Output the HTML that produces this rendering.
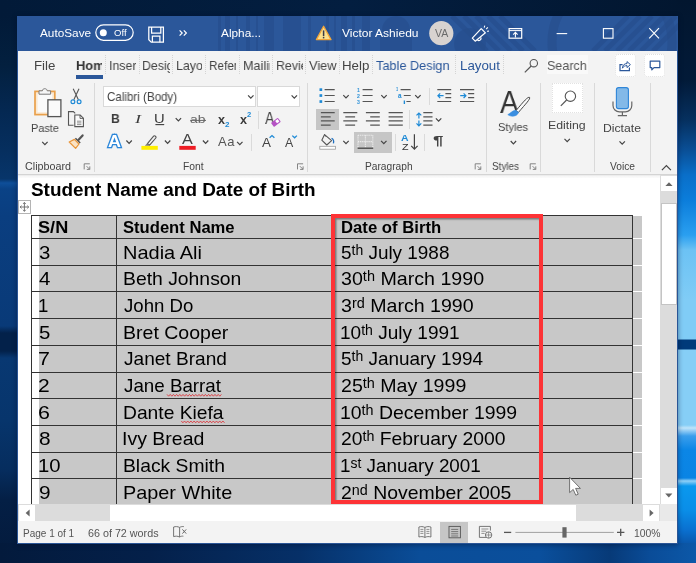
<!DOCTYPE html>
<html lang="en">
<head>
<meta charset="utf-8">
<title>Alphabetize - Word</title>
<style>
*{box-sizing:border-box;margin:0;padding:0}
html,body{width:696px;height:563px;overflow:hidden}
body{position:relative;background:#031c3c;font-family:"Liberation Sans",sans-serif;color:#444}
.abs{position:absolute}
.t{position:absolute;white-space:nowrap;transform-origin:0 50%;display:block;z-index:2;will-change:transform}
svg{position:absolute;overflow:visible}
.desk{position:absolute}
#win{position:absolute;left:17px;top:16px;width:661px;height:527.6px;background:#f3f3f3;border:1px solid #2a5596;border-top:0;box-shadow:0 1px 5px rgba(0,10,40,0.45)}
#titlebar{position:absolute;left:17px;top:16px;width:661px;height:34.6px;background:#2b579a;overflow:hidden}
#doc{position:absolute;left:18px;top:175px;width:642.2px;height:329.3px;background:#fff;overflow:hidden}
sup{font-size:74%;vertical-align:baseline;position:relative;top:-0.32em;line-height:0}
</style>
</head>
<body>

<div class="desk" style="left:0;top:0;width:696px;height:563px;background:linear-gradient(90deg,#021a38 0%,#031e40 50%,#02162f 100%)"></div>
<div class="desk" style="left:0;top:16px;width:18px;height:547px;background:linear-gradient(180deg,#021a38 0px,#03203f 50px,#042852 95px,#062f5f 135px,#07356a 163px,#0e4f9a 167px,#0a4286 173px,#0a3e80 200px,#093a78 310px,#03214a 317px,#03214a 335px,#083872 342px,#07356c 404px,#062d5e 454px,#041f45 484px,#031a3c 547px)"></div>
<div class="desk" style="left:677px;top:0;width:19px;height:563px;background:linear-gradient(180deg,#02162f 0px,#021a38 80px,#06305f 120px,#0a4f96 150px,#0a6fc9 175px,#0b7ddb 200px,#2a9ff0 235px,#6cc2f4 250px,#80ccf6 300px,#80ccf6 339px,#003a7a 340px,#003a7a 349px,#86cef6 350px,#86cef6 425px,#bfe4fa 428px,#3a9eec 436px,#0b86e6 450px,#0a84e4 478px,#8fd0f7 481px,#0a98ee 486px,#0a8ee8 510px,#0a70d0 530px,#0a55a8 545px,#0a4a96 563px)"></div>
<div class="desk" style="left:0;top:543px;width:696px;height:20px;background:linear-gradient(90deg,#031a3c 0px,#04204a 150px,#063068 300px,#0a4d98 420px,#0a4f9c 540px,#073a78 610px,#0a4c98 650px,#0c58a8 696px)"></div>
<div id="win"></div>
<div id="titlebar">
<svg width="661" height="35" viewBox="17 16 661 35" style="left:0;top:0">
<g fill="#264d8c" opacity="0.6">
<rect x="218" y="16" width="3" height="35"/><rect x="225" y="16" width="5" height="35"/><rect x="236" y="16" width="2" height="35"/>
<rect x="246" y="16" width="4" height="35"/><rect x="256" y="16" width="2" height="35"/><rect x="264" y="16" width="10" height="35"/>
<rect x="283" y="16" width="18" height="35"/><rect x="308" y="16" width="3" height="35"/><rect x="326" y="16" width="3" height="35"/>
<rect x="334" y="16" width="2" height="35"/><rect x="341" y="16" width="6" height="35"/><rect x="352" y="16" width="3" height="35"/><rect x="362" y="16" width="8" height="35"/>
<circle cx="396" cy="30" r="14"/><rect x="380" y="36" width="32" height="15"/>
<circle cx="470" cy="44" r="16"/>

</g>
<circle cx="612" cy="42" r="60" fill="none" stroke="#264d8c" stroke-width="9" opacity="0.6"/>
<g stroke="#264d8c" stroke-width="5" opacity="0.6">
<path d="M452 16l35 35M464 16l35 35M476 16l35 35M488 16l35 35M500 16l35 35"/>
<path d="M640 16l-35 35M652 16l-35 35M664 16l-35 35M676 16l-35 35M688 16l-35 35M628 16l-35 35"/>
</g>
</svg>
</div>
<div class="abs" style="left:546.5px;top:55px;width:41.5px;height:18.5px;background:#f9f9f9"></div>
<div class="abs" style="left:614.5px;top:53.5px;width:21px;height:23.5px;background:#fff;border:1px dotted #e0e0e0;border-radius:3px"></div>
<div class="abs" style="left:644.2px;top:53.5px;width:20.6px;height:23.5px;background:#fff;border:1px dotted #e0e0e0;border-radius:3px"></div>
<div class="abs" style="left:105.2px;top:55px;width:1px;height:20px;background:repeating-linear-gradient(#d4d4d4 0 1px,rgba(0,0,0,0) 1px 2px)"></div>
<div class="abs" style="left:138.5px;top:55px;width:1px;height:20px;background:repeating-linear-gradient(#d4d4d4 0 1px,rgba(0,0,0,0) 1px 2px)"></div>
<div class="abs" style="left:171.9px;top:55px;width:1px;height:20px;background:repeating-linear-gradient(#d4d4d4 0 1px,rgba(0,0,0,0) 1px 2px)"></div>
<div class="abs" style="left:205.3px;top:55px;width:1px;height:20px;background:repeating-linear-gradient(#d4d4d4 0 1px,rgba(0,0,0,0) 1px 2px)"></div>
<div class="abs" style="left:238.6px;top:55px;width:1px;height:20px;background:repeating-linear-gradient(#d4d4d4 0 1px,rgba(0,0,0,0) 1px 2px)"></div>
<div class="abs" style="left:272.0px;top:55px;width:1px;height:20px;background:repeating-linear-gradient(#d4d4d4 0 1px,rgba(0,0,0,0) 1px 2px)"></div>
<div class="abs" style="left:305.4px;top:55px;width:1px;height:20px;background:repeating-linear-gradient(#d4d4d4 0 1px,rgba(0,0,0,0) 1px 2px)"></div>
<div class="abs" style="left:338.9px;top:55px;width:1px;height:20px;background:repeating-linear-gradient(#d4d4d4 0 1px,rgba(0,0,0,0) 1px 2px)"></div>
<div class="abs" style="left:371.8px;top:55px;width:1px;height:20px;background:repeating-linear-gradient(#d4d4d4 0 1px,rgba(0,0,0,0) 1px 2px)"></div>
<div class="abs" style="left:455.0px;top:55px;width:1px;height:20px;background:repeating-linear-gradient(#d4d4d4 0 1px,rgba(0,0,0,0) 1px 2px)"></div>
<div class="abs" style="left:503.1px;top:55px;width:1px;height:20px;background:repeating-linear-gradient(#d4d4d4 0 1px,rgba(0,0,0,0) 1px 2px)"></div>
<div class="abs" style="left:76px;top:75px;width:26.8px;height:3.6px;background:#2b579a"></div>
<div class="abs" style="left:18px;top:174px;width:659px;height:1px;background:#d4d4d4"></div>
<div class="abs" style="left:94px;top:83px;width:1px;height:88.5px;background:#d9d9d9"></div>
<div class="abs" style="left:307px;top:83px;width:1px;height:88.5px;background:#d9d9d9"></div>
<div class="abs" style="left:486px;top:83px;width:1px;height:88.5px;background:#d9d9d9"></div>
<div class="abs" style="left:540px;top:83px;width:1px;height:88.5px;background:#d9d9d9"></div>
<div class="abs" style="left:594px;top:83px;width:1px;height:88.5px;background:#d9d9d9"></div>
<div class="abs" style="left:650px;top:83px;width:1px;height:88.5px;background:#d9d9d9"></div>
<div class="abs" style="left:257.7px;top:111px;width:1px;height:17.5px;background:#dadada"></div>
<div class="abs" style="left:251.2px;top:133.5px;width:1px;height:17.5px;background:#dadada"></div>
<div class="abs" style="left:429.3px;top:88px;width:1px;height:16.5px;background:#dadada"></div>
<div class="abs" style="left:409.3px;top:110px;width:1px;height:18.5px;background:#dadada"></div>
<div class="abs" style="left:395.0px;top:133.5px;width:1px;height:17.5px;background:#dadada"></div>
<div class="abs" style="left:423.5px;top:133.5px;width:1px;height:17.5px;background:#dadada"></div>
<div class="abs" style="left:103.2px;top:86px;width:153px;height:21px;background:#fff;border:1px solid #d9d9d9"></div>
<div class="abs" style="left:257.4px;top:86px;width:42.2px;height:21px;background:#fff;border:1px solid #d9d9d9"></div>
<div class="abs" style="left:316.2px;top:109.4px;width:22.9px;height:20.2px;background:#c6c6c6"></div>
<div class="abs" style="left:354.2px;top:132px;width:37.9px;height:20.6px;background:#c6c6c6"></div>
<div class="abs" style="left:552px;top:83.3px;width:30.6px;height:30.2px;background:#fff;border:1px dotted #e2e2e2"></div>
<span class="t" id="t_autosave" style="left:40.00px;top:26.00px;font-size:11.6px;line-height:14px;font-weight:400;color:#fff;transform:scaleX(1.0171);">AutoSave</span>
<span class="t" id="t_off" style="left:114.46px;top:28.00px;font-size:8.8px;line-height:11px;font-weight:400;color:#fff;transform:scaleX(1.0844);">Off</span>
<span class="t" id="t_alpha" style="left:220.80px;top:26.00px;font-size:11.6px;line-height:14px;font-weight:400;color:#fff;transform:scaleX(1.0196);">Alpha...</span>
<span class="t" id="t_victor" style="left:342.20px;top:26.00px;font-size:11.6px;line-height:14px;font-weight:400;color:#fff;transform:scaleX(1.0348);">Victor Ashiedu</span>
<span class="t" id="tab_file" style="left:34.12px;top:58.00px;font-size:13.3px;line-height:16px;font-weight:400;color:#444;transform:scaleX(0.9823);">File</span>
<div class="abs" style="left:73px;top:50.5px;width:29.0px;height:29.5px;overflow:hidden"><span class="t" id="tab_home" style="left:3.00px;top:7.50px;font-size:13.3px;line-height:16px;font-weight:700;color:#333;transform:scaleX(0.9700);">Home</span></div>
<div class="abs" style="left:106.5px;top:50.5px;width:29.1px;height:29.5px;overflow:hidden"><span class="t" id="tab_insert" style="left:2.80px;top:7.50px;font-size:13.3px;line-height:16px;font-weight:400;color:#444;transform:scaleX(0.9300);">Insert</span></div>
<div class="abs" style="left:139.8px;top:50.5px;width:29.8px;height:29.5px;overflow:hidden"><span class="t" id="tab_design" style="left:2.60px;top:7.50px;font-size:13.3px;line-height:16px;font-weight:400;color:#444;transform:scaleX(0.9300);">Design</span></div>
<div class="abs" style="left:173.2px;top:50.5px;width:29.2px;height:29.5px;overflow:hidden"><span class="t" id="tab_layout" style="left:2.80px;top:7.50px;font-size:13.3px;line-height:16px;font-weight:400;color:#444;transform:scaleX(0.9300);">Layout</span></div>
<div class="abs" style="left:206.6px;top:50.5px;width:29.6px;height:29.5px;overflow:hidden"><span class="t" id="tab_refs" style="left:2.40px;top:7.50px;font-size:13.3px;line-height:16px;font-weight:400;color:#444;transform:scaleX(0.8850);">References</span></div>
<div class="abs" style="left:239.9px;top:50.5px;width:30.3px;height:29.5px;overflow:hidden"><span class="t" id="tab_mail" style="left:2.90px;top:7.50px;font-size:13.3px;line-height:16px;font-weight:400;color:#444;transform:scaleX(0.9500);">Mailings</span></div>
<div class="abs" style="left:273.3px;top:50.5px;width:29.7px;height:29.5px;overflow:hidden"><span class="t" id="tab_review" style="left:2.70px;top:7.50px;font-size:13.3px;line-height:16px;font-weight:400;color:#444;transform:scaleX(0.9300);">Review</span></div>
<span class="t" id="tab_view" style="left:308.76px;top:58.00px;font-size:13.3px;line-height:16px;font-weight:400;color:#444;transform:scaleX(0.9614);">View</span>
<span class="t" id="tab_help" style="left:342.01px;top:58.00px;font-size:13.3px;line-height:16px;font-weight:400;color:#444;transform:scaleX(0.9864);">Help</span>
<span class="t" id="tab_tdesign" style="left:375.76px;top:58.00px;font-size:13.3px;line-height:16px;font-weight:400;color:#2b579a;transform:scaleX(0.9571);">Table Design</span>
<span class="t" id="tab_tlayout" style="left:459.70px;top:58.00px;font-size:13.3px;line-height:16px;font-weight:400;color:#2b579a;transform:scaleX(0.9949);">Layout</span>
<span class="t" id="tab_search" style="left:547.29px;top:58.00px;font-size:13.3px;line-height:16px;font-weight:400;color:#555;transform:scaleX(0.9432);">Search</span>
<span class="t" id="r_paste" style="left:31.03px;top:121.00px;font-size:11.2px;line-height:14px;font-weight:400;color:#444;transform:scaleX(0.9725);">Paste</span>
<span class="t" id="r_clipboard" style="left:24.97px;top:160.00px;font-size:10.2px;line-height:13px;font-weight:400;color:#444;transform:scaleX(1.0541);">Clipboard</span>
<span class="t" id="r_calibri" style="left:106.71px;top:90.00px;font-size:11.9px;line-height:15px;font-weight:400;color:#444;transform:scaleX(0.9739);">Calibri (Body)</span>
<span class="t" id="r_font" style="left:182.74px;top:160.00px;font-size:10.2px;line-height:13px;font-weight:400;color:#444;transform:scaleX(1.0127);">Font</span>
<span class="t" id="r_paragraph" style="left:364.95px;top:160.00px;font-size:10.2px;line-height:13px;font-weight:400;color:#444;transform:scaleX(1.0011);">Paragraph</span>
<span class="t" id="r_styles_btn" style="left:498.21px;top:120.00px;font-size:11.4px;line-height:14px;font-weight:400;color:#444;transform:scaleX(0.9719);">Styles</span>
<span class="t" id="r_styles" style="left:491.51px;top:160.00px;font-size:10.2px;line-height:13px;font-weight:400;color:#444;transform:scaleX(0.9704);">Styles</span>
<span class="t" id="r_editing" style="left:548.32px;top:118.00px;font-size:11.4px;line-height:14px;font-weight:400;color:#444;transform:scaleX(1.0797);">Editing</span>
<span class="t" id="r_dictate" style="left:603.33px;top:121.00px;font-size:11.4px;line-height:14px;font-weight:400;color:#444;transform:scaleX(1.0706);">Dictate</span>
<span class="t" id="r_voice" style="left:610.00px;top:160.00px;font-size:10.2px;line-height:13px;font-weight:400;color:#444;transform:scaleX(1.0041);">Voice</span>
<span class="t" id="g_b" style="left:110.52px;top:110.00px;font-size:13.4px;line-height:17px;font-weight:700;color:#3b3b3b;transform:scaleX(0.9091);">B</span>
<span class="t" id="g_i" style="left:134.50px;top:111.00px;font-size:13.2px;line-height:16px;font-weight:400;color:#3b3b3b;transform:scaleX(1.3800);font-family:'Liberation Serif',serif;font-style:italic">I</span>
<span class="t" id="g_u" style="left:154.33px;top:111.00px;font-size:12.6px;line-height:16px;font-weight:400;color:#3b3b3b;transform:scaleX(1.1724);">U</span>
<span class="t" id="g_ab" style="left:190.20px;top:112.00px;font-size:11.6px;line-height:14px;font-weight:400;color:#666;transform:scaleX(1.2000);">ab</span>
<span class="t" id="g_xsub" style="left:217.75px;top:112.00px;font-size:12.6px;line-height:16px;font-weight:700;color:#3b3b3b;transform:scaleX(1.0000);">x</span>
<span class="t" id="g_xsub2" style="left:224.51px;top:120.00px;font-size:7.0px;line-height:9px;font-weight:700;color:#1e8ad6;transform:scaleX(1.1429);">2</span>
<span class="t" id="g_xsup" style="left:240.25px;top:112.00px;font-size:12.6px;line-height:16px;font-weight:700;color:#3b3b3b;transform:scaleX(1.0000);">x</span>
<span class="t" id="g_xsup2" style="left:246.93px;top:110.00px;font-size:7.0px;line-height:9px;font-weight:700;color:#1e8ad6;transform:scaleX(1.0857);">2</span>
<span class="t" id="g_clearA" style="left:264.60px;top:108.00px;font-size:17.0px;line-height:21px;font-weight:400;color:#444;transform:scaleX(0.8178);">A</span>
<span class="t" id="g_Aa" style="left:218.00px;top:134.00px;font-size:13.0px;line-height:16px;font-weight:400;color:#555;transform:scaleX(0.9879);letter-spacing:0.6px">Aa</span>
<span class="t" id="g_growA" style="left:261.80px;top:134.00px;font-size:13.4px;line-height:17px;font-weight:400;color:#444;transform:scaleX(0.9778);">A</span>
<span class="t" id="g_shrinkA" style="left:284.50px;top:136.00px;font-size:12.2px;line-height:15px;font-weight:400;color:#444;transform:scaleX(1.0125);">A</span>
<span class="t" id="g_colorA" style="left:182.40px;top:131.00px;font-size:14.0px;line-height:17px;font-weight:400;color:#444;transform:scaleX(1.1568);">A</span>
<span class="t" id="g_sortA" style="left:401.43px;top:132.00px;font-size:9.6px;line-height:12px;font-weight:700;color:#1e8ad6;transform:scaleX(1.0923);">A</span>
<span class="t" id="g_sortZ" style="left:401.59px;top:142.00px;font-size:8.8px;line-height:11px;font-weight:400;color:#333;transform:scaleX(1.2200);">Z</span>
<span class="t" id="g_pil" style="left:433.22px;top:134.00px;font-size:12.0px;line-height:15px;font-weight:700;color:#444;transform:scaleX(1.5652);">¶</span>
<span class="t" id="g_stylesA" style="left:500.00px;top:83.00px;font-size:32.2px;line-height:39px;font-weight:400;color:#333;transform:scaleX(0.8698);">A</span>
<span class="t" id="s_page" style="left:22.55px;top:528.00px;font-size:10.0px;line-height:12px;font-weight:400;color:#555;transform:scaleX(0.9940);">Page 1 of 1</span>
<span class="t" id="s_words" style="left:88.26px;top:528.00px;font-size:10.0px;line-height:12px;font-weight:400;color:#555;transform:scaleX(1.0749);">66 of 72 words</span>
<span class="t" id="s_zoom" style="left:633.62px;top:528.00px;font-size:10.0px;line-height:12px;font-weight:400;color:#555;transform:scaleX(1.0367);">100%</span>
<div id="doc">
<span class="t" id="d_head" style="left:13.20px;top:3.00px;font-size:18.8px;line-height:23px;font-weight:700;color:#000;transform:scaleX(1.0066);">Student Name and Date of Birth</span>
<div class="abs" style="left:20.7px;top:39.8px;width:594.3px;height:300px;background:#c8c8c8"></div>
<div class="abs" style="left:615.0px;top:41.0px;width:9px;height:22.0px;background:#c8c8c8"></div>
<div class="abs" style="left:615.0px;top:64.0px;width:9px;height:26.0px;background:#c8c8c8"></div>
<div class="abs" style="left:615.0px;top:91.0px;width:9px;height:25.0px;background:#c8c8c8"></div>
<div class="abs" style="left:615.0px;top:117.0px;width:9px;height:26.0px;background:#c8c8c8"></div>
<div class="abs" style="left:615.0px;top:144.0px;width:9px;height:26.0px;background:#c8c8c8"></div>
<div class="abs" style="left:615.0px;top:171.0px;width:9px;height:26.0px;background:#c8c8c8"></div>
<div class="abs" style="left:615.0px;top:198.0px;width:9px;height:25.0px;background:#c8c8c8"></div>
<div class="abs" style="left:615.0px;top:224.0px;width:9px;height:26.0px;background:#c8c8c8"></div>
<div class="abs" style="left:615.0px;top:251.0px;width:9px;height:26.0px;background:#c8c8c8"></div>
<div class="abs" style="left:615.0px;top:278.0px;width:9px;height:25.0px;background:#c8c8c8"></div>
<div class="abs" style="left:615.0px;top:304.0px;width:9px;height:26.0px;background:#c8c8c8"></div>
<div class="abs" style="left:13.2px;top:40.0px;width:602.3px;height:1px;background:#333"></div>
<div class="abs" style="left:13.2px;top:63.0px;width:602.3px;height:1px;background:#333"></div>
<div class="abs" style="left:13.2px;top:90.0px;width:602.3px;height:1px;background:#333"></div>
<div class="abs" style="left:13.2px;top:116.0px;width:602.3px;height:1px;background:#333"></div>
<div class="abs" style="left:13.2px;top:143.0px;width:602.3px;height:1px;background:#333"></div>
<div class="abs" style="left:13.2px;top:170.0px;width:602.3px;height:1px;background:#333"></div>
<div class="abs" style="left:13.2px;top:197.0px;width:602.3px;height:1px;background:#333"></div>
<div class="abs" style="left:13.2px;top:223.0px;width:602.3px;height:1px;background:#333"></div>
<div class="abs" style="left:13.2px;top:250.0px;width:602.3px;height:1px;background:#333"></div>
<div class="abs" style="left:13.2px;top:277.0px;width:602.3px;height:1px;background:#333"></div>
<div class="abs" style="left:13.2px;top:303.0px;width:602.3px;height:1px;background:#333"></div>
<div class="abs" style="left:13.0px;top:40.0px;width:1px;height:300px;background:#333"></div>
<div class="abs" style="left:98.0px;top:40.0px;width:1px;height:300px;background:#333"></div>
<div class="abs" style="left:314.0px;top:40.0px;width:1px;height:300px;background:#333"></div>
<div class="abs" style="left:522.0px;top:40.0px;width:1px;height:300px;background:#333"></div>
<div class="abs" style="left:614.0px;top:40.0px;width:1px;height:300px;background:#333"></div>
<span class="t" id="h_sn" style="left:20.43px;top:43.00px;font-size:15.8px;line-height:19px;font-weight:700;color:#000;transform:scaleX(1.1475);">S/N</span>
<span class="t" id="h_name" style="left:105.27px;top:43.00px;font-size:15.8px;line-height:19px;font-weight:700;color:#000;transform:scaleX(1.0508);">Student Name</span>
<span class="t" id="h_dob" style="left:322.84px;top:43.00px;font-size:15.8px;line-height:19px;font-weight:700;color:#000;transform:scaleX(1.0577);">Date of Birth</span>
<span class="t" id="c_sn0" style="left:20.78px;top:66.00px;font-size:18.6px;line-height:23px;font-weight:400;color:#000;transform:scaleX(1.0971);">3</span>
<span class="t" id="c_nm0" style="left:104.59px;top:66.00px;font-size:18.6px;line-height:23px;font-weight:400;color:#000;transform:scaleX(1.0742);">Nadia Ali</span>
<span class="t" id="c_dt0" style="left:323.14px;top:66.00px;font-size:18.6px;line-height:23px;font-weight:400;color:#000;transform:scaleX(1.0171);">5<sup>th</sup> July 1988</span>
<span class="t" id="c_sn1" style="left:21.05px;top:92.00px;font-size:18.6px;line-height:23px;font-weight:400;color:#000;transform:scaleX(1.1027);">4</span>
<span class="t" id="c_nm1" style="left:104.64px;top:92.00px;font-size:18.6px;line-height:23px;font-weight:400;color:#000;transform:scaleX(1.0405);">Beth Johnson</span>
<span class="t" id="c_dt1" style="left:323.11px;top:92.00px;font-size:18.6px;line-height:23px;font-weight:400;color:#000;transform:scaleX(1.0560);">30<sup>th</sup> March 1990</span>
<span class="t" id="c_sn2" style="left:20.10px;top:119.00px;font-size:18.6px;line-height:23px;font-weight:400;color:#000;transform:scaleX(1.0000);">1</span>
<span class="t" id="c_nm2" style="left:105.95px;top:119.00px;font-size:18.6px;line-height:23px;font-weight:400;color:#000;transform:scaleX(0.9978);">John Do</span>
<span class="t" id="c_dt2" style="left:323.11px;top:119.00px;font-size:18.6px;line-height:23px;font-weight:400;color:#000;transform:scaleX(1.0530);">3<sup>rd</sup> March 1990</span>
<span class="t" id="c_sn3" style="left:20.78px;top:146.00px;font-size:18.6px;line-height:23px;font-weight:400;color:#000;transform:scaleX(1.0971);">5</span>
<span class="t" id="c_nm3" style="left:104.62px;top:146.00px;font-size:18.6px;line-height:23px;font-weight:400;color:#000;transform:scaleX(1.0508);">Bret Cooper</span>
<span class="t" id="c_dt3" style="left:322.36px;top:146.00px;font-size:18.6px;line-height:23px;font-weight:400;color:#000;transform:scaleX(1.0236);">10<sup>th</sup> July 1991</span>
<span class="t" id="c_sn4" style="left:20.45px;top:172.00px;font-size:18.6px;line-height:23px;font-weight:400;color:#000;transform:scaleX(1.1529);">7</span>
<span class="t" id="c_nm4" style="left:105.94px;top:172.00px;font-size:18.6px;line-height:23px;font-weight:400;color:#000;transform:scaleX(1.0258);">Janet Brand</span>
<span class="t" id="c_dt4" style="left:323.14px;top:172.00px;font-size:18.6px;line-height:23px;font-weight:400;color:#000;transform:scaleX(1.0173);">5<sup>th</sup> January 1994</span>
<span class="t" id="c_sn5" style="left:20.47px;top:199.00px;font-size:18.6px;line-height:23px;font-weight:400;color:#000;transform:scaleX(1.1294);">2</span>
<span class="t" id="c_nm5" style="left:105.95px;top:199.00px;font-size:18.6px;line-height:23px;font-weight:400;color:#000;transform:scaleX(1.0089);">Jane Barrat</span>
<span class="t" id="c_dt5" style="left:322.85px;top:199.00px;font-size:18.6px;line-height:23px;font-weight:400;color:#000;transform:scaleX(1.0530);">25<sup>th</sup> May 1999</span>
<span class="t" id="c_sn6" style="left:20.45px;top:226.00px;font-size:18.6px;line-height:23px;font-weight:400;color:#000;transform:scaleX(1.1529);">6</span>
<span class="t" id="c_nm6" style="left:104.65px;top:226.00px;font-size:18.6px;line-height:23px;font-weight:400;color:#000;transform:scaleX(1.0350);">Dante Kiefa</span>
<span class="t" id="c_dt6" style="left:322.33px;top:226.00px;font-size:18.6px;line-height:23px;font-weight:400;color:#000;transform:scaleX(1.0445);">10<sup>th</sup> December 1999</span>
<span class="t" id="c_sn7" style="left:20.76px;top:252.00px;font-size:18.6px;line-height:23px;font-weight:400;color:#000;transform:scaleX(1.1200);">8</span>
<span class="t" id="c_nm7" style="left:104.36px;top:252.00px;font-size:18.6px;line-height:23px;font-weight:400;color:#000;transform:scaleX(1.0490);">Ivy Bread</span>
<span class="t" id="c_dt7" style="left:322.86px;top:252.00px;font-size:18.6px;line-height:23px;font-weight:400;color:#000;transform:scaleX(1.0396);">20<sup>th</sup> February 2000</span>
<span class="t" id="c_sn8" style="left:19.96px;top:279.00px;font-size:18.6px;line-height:23px;font-weight:400;color:#000;transform:scaleX(1.0919);">10</span>
<span class="t" id="c_nm8" style="left:104.64px;top:279.00px;font-size:18.6px;line-height:23px;font-weight:400;color:#000;transform:scaleX(1.0377);">Black Smith</span>
<span class="t" id="c_dt8" style="left:322.38px;top:279.00px;font-size:18.6px;line-height:23px;font-weight:400;color:#000;transform:scaleX(1.0139);">1<sup>st</sup> January 2001</span>
<span class="t" id="c_sn9" style="left:20.76px;top:306.00px;font-size:18.6px;line-height:23px;font-weight:400;color:#000;transform:scaleX(1.1200);">9</span>
<span class="t" id="c_nm9" style="left:104.60px;top:306.00px;font-size:18.6px;line-height:23px;font-weight:400;color:#000;transform:scaleX(1.0670);">Paper White</span>
<span class="t" id="c_dt9" style="left:322.86px;top:306.00px;font-size:18.6px;line-height:23px;font-weight:400;color:#000;transform:scaleX(1.0443);">2<sup>nd</sup> November 2005</span>
<svg width="642" height="330" viewBox="0 0 642 330" style="left:0;top:0"><polyline points="149.0,219.4 150.6,221.2 152.2,219.4 153.8,221.2 155.4,219.4 157.0,221.2 158.6,219.4 160.2,221.2 161.8,219.4 163.4,221.2 165.0,219.4 166.6,221.2 168.2,219.4 169.8,221.2 171.4,219.4 173.0,221.2 174.6,219.4 176.2,221.2 177.8,219.4 179.4,221.2 181.0,219.4 182.6,221.2 184.2,219.4 185.8,221.2 187.4,219.4 189.0,221.2 190.6,219.4 192.2,221.2 193.8,219.4 195.4,221.2 197.0,219.4 198.6,221.2 200.2,219.4 201.8,221.2 203.4,219.4" fill="none" stroke="#e0282e" stroke-width="0.8"/><polyline points="163.3,246.0 164.9,247.8 166.5,246.0 168.1,247.8 169.7,246.0 171.3,247.8 172.9,246.0 174.5,247.8 176.1,246.0 177.7,247.8 179.3,246.0 180.9,247.8 182.5,246.0 184.1,247.8 185.7,246.0 187.3,247.8 188.9,246.0 190.5,247.8 192.1,246.0 193.7,247.8 195.3,246.0 196.9,247.8 198.5,246.0 200.1,247.8 201.7,246.0 203.3,247.8 204.9,246.0 206.5,247.8" fill="none" stroke="#e0282e" stroke-width="0.8"/></svg>
<div class="abs" style="left:313.3px;top:39.2px;width:211.7px;height:289.7px;border:4px solid #fd3336;box-shadow:inset 1.5px 1.5px 1.5px rgba(0,0,0,0.4)"></div>
<div class="abs" style="left:-0.1px;top:25.0px;width:13px;height:13.5px;background:#fff;border:1px solid #b4b4b4"></div>
</div>
<div class="abs" style="left:18px;top:175px;width:659px;height:3.4px;background:linear-gradient(#e6e6e6,#f6f6f6 40%,#fbfbfb)"></div>
<div class="abs" style="left:660.2px;top:175px;width:16.8px;height:329.3px;background:#dcdcdc"></div>
<div class="abs" style="left:660.6px;top:175.6px;width:16.2px;height:15.6px;background:#fff"></div>
<div class="abs" style="left:660.6px;top:203px;width:16px;height:102.3px;background:#fff;border:1px solid #c4c4c4"></div>
<div class="abs" style="left:660.6px;top:488px;width:16.2px;height:15.6px;background:#fff"></div>
<div class="abs" style="left:18px;top:504.3px;width:659px;height:17.6px;background:#dcdcdc"></div>
<div class="abs" style="left:19.3px;top:505.2px;width:15.6px;height:15.4px;background:#fff"></div>
<div class="abs" style="left:110.4px;top:505.2px;width:466px;height:15.4px;background:#fff"></div>
<div class="abs" style="left:643px;top:505.2px;width:16px;height:15.4px;background:#fff"></div>
<div class="abs" style="left:660.2px;top:504.3px;width:16.8px;height:17.6px;background:#e9e9e9"></div>
<div class="abs" style="left:18px;top:520.8px;width:659px;height:21.8px;background:#f3f3f3"></div>
<div class="abs" style="left:440.4px;top:521.7px;width:28px;height:20.9px;background:#c6c6c6"></div>
<svg id="icons" width="696" height="563" viewBox="0 0 696 563" style="left:0;top:0;z-index:3">
<g id="ic-title" fill="none" stroke="#fff">
<rect x="95.8" y="24.9" width="37.4" height="15.4" rx="7.7" stroke-width="1.2"/>
<circle cx="103.3" cy="32.8" r="3.5" fill="#fff" stroke="none"/>
<path d="M148.8 27.1H163.4V42.2H151.2L148.8 39.8Z" stroke-width="1.25"/>
<path d="M151.6 27.1V33.2H160.8V27.1" stroke-width="1.25"/>
<path d="M152.4 42.2V36.2H159.9V42.2" stroke-width="1.25"/>
<path d="M179.6 30.4L182.2 33L179.6 35.6M183.8 30.4L186.4 33L183.8 35.6" stroke-width="1.2"/>
<path d="M323.6 26.2L331 39.6H316.4Z" fill="#fbe08f" stroke="#f2a53a" stroke-width="1.3" stroke-linejoin="round"/>
<path d="M323.6 30.4V36.2" stroke="#3a3a48" stroke-width="1.5"/><rect x="322.85" y="37" width="1.5" height="1.4" fill="#3a3a48" stroke="none"/>
<circle cx="441.3" cy="33.2" r="12.1" fill="#d8d3d0" stroke="none"/>
<path d="M472.3 38.2L481.2 28.6L485.4 32.8L475.2 41.2Z" stroke-width="1.2" stroke-linejoin="round"/>
<path d="M477.4 39.6A1.8 1.8 0 1 0 480.6 37.4" stroke-width="1.1"/>
<path d="M484.2 27.6L484.8 25.6M486.2 29.2L487.8 27.4M487.2 31.4L489 31" stroke-width="1.1"/>
<rect x="509.1" y="28.6" width="12.6" height="9.6" stroke-width="1.2"/>
<path d="M509.1 30.6H521.7" stroke-width="1"/>
<path d="M515.4 37.4V32.6M513.2 34.6L515.4 32.4L517.6 34.6" stroke-width="1.1"/>
<path d="M556.6 33.6H567.2" stroke-width="1.1"/>
<rect x="603.4" y="28.6" width="9.6" height="9.6" stroke-width="1.1"/>
<path d="M649.2 28.2L659 38.4M659 28.2L649.2 38.4" stroke-width="1.15"/>
</g>
<g id="ic-tabs" fill="none">
<circle cx="533.8" cy="63.2" r="3.7" stroke="#555" stroke-width="1.1"/><path d="M531.2 66L524.8 72.4" stroke="#555" stroke-width="1.2"/>
<path d="M622.6 64.6H620V70.6H629.4V67.4" stroke="#2b579a" stroke-width="1.2"/>
<path d="M622.4 68.2C622.6 65 624.4 63.6 627 63.6V61.6L630.4 64.6L627 67.6V65.6C625 65.6 623.4 66.4 622.4 68.2Z" stroke="#2b579a" stroke-width="1"/>
<path d="M650.2 61.2H659.8V67.6H654L651.8 69.8V67.6H650.2Z" stroke="#2b579a" stroke-width="1.2" stroke-linejoin="round"/>
</g>
<g id="ic-clipboard" fill="none">
<rect x="35" y="91.4" width="19.8" height="23.2" fill="#fbe9d2" stroke="#e9a04b" stroke-width="1.7"/>
<rect x="37.6" y="93.8" width="14.6" height="18.4" fill="#fafafa" stroke="none"/>
<path d="M39 94.2V90.8H42.4C42.4 88 47.2 88 47.2 90.8H50.6V94.2Z" fill="#f6f6f6" stroke="#7a7a7a" stroke-width="1"/>
<rect x="47.9" y="99.8" width="13" height="16.8" fill="#fafafa" stroke="#555" stroke-width="1.3"/>
<path d="M42.20 141.80L44.90 144.60L47.60 141.80" fill="none" stroke="#444" stroke-width="1.2"/>
<path d="M73.2 88.8L78.4 99.8M79 88.8L73.8 99.8" stroke="#555" stroke-width="1.1"/>
<circle cx="72.9" cy="101.8" r="1.9" stroke="#1e8ad6" stroke-width="1.2"/><circle cx="79.1" cy="101.8" r="1.9" stroke="#1e8ad6" stroke-width="1.2"/>
<path d="M73.6 125.2H68.5V111.6H73.4L75.2 113.4" stroke="#555" stroke-width="1.1"/>
<path d="M74.8 115H80.2L83.4 118.2V126.6H74.8Z" fill="#fafafa" stroke="#555" stroke-width="1.1"/>
<path d="M80 115V118.4H83.4" stroke="#555" stroke-width="0.9"/>
<path d="M77 121.2H81.4M77 122.9H81.4M77 124.6H81.4" stroke="#777" stroke-width="0.8"/>
<path d="M82.6 135.4L78.6 139.8" stroke="#555" stroke-width="2.2" stroke-linecap="round"/>
<path d="M75.4 138.2L80.2 143" stroke="#555" stroke-width="1.6"/>
<path d="M74.4 139.4L79 144L75.6 148.4L69.2 142Z" fill="#fbe3c4" stroke="#e9963a" stroke-width="1.2" stroke-linejoin="round"/>
<path d="M84.2 169.4V163.8H89.8" fill="none" stroke="#777" stroke-width="0.9"/><path d="M86.60000000000001 166.20000000000002L89.60000000000001 169.20000000000002M89.8 166.4V169.4H86.8" fill="none" stroke="#777" stroke-width="0.9"/>
</g>
<g id="ic-font" fill="none">
<path d="M248.10 95.40L250.80 98.20L253.50 95.40" fill="none" stroke="#444" stroke-width="1.2"/>
<path d="M291.60 95.40L294.30 98.20L297.00 95.40" fill="none" stroke="#444" stroke-width="1.2"/>
<path d="M155.4 124.6H164.2" stroke="#3b3b3b" stroke-width="1.1"/>
<path d="M175.70 118.20L178.40 121.00L181.10 118.20" fill="none" stroke="#444" stroke-width="1.2"/>
<path d="M190.2 120.4H206" stroke="#666" stroke-width="1"/>
<g transform="rotate(-38 275.8 122.4)"><rect x="271.6" y="119.8" width="8.6" height="5.2" rx="0.8" fill="#b552c4" stroke="none"/><rect x="276.2" y="120.9" width="3" height="3" fill="#fff" stroke="none"/></g>
<path d="M126.40 140.50L129.10 143.30L131.80 140.50" fill="none" stroke="#444" stroke-width="1.2"/>
<path d="M147.4 143.6L153.6 136.2C154.6 135 156.8 136.8 155.8 138L149.6 145.2Z" stroke="#555" stroke-width="1.1" stroke-linejoin="round"/>
<path d="M147.4 143.6L145.4 145.4H149.2L149.6 145.2Z" fill="#777" stroke="#777" stroke-width="0.6"/>
<rect x="141.4" y="145.9" width="16.4" height="3.9" fill="#ffef00" stroke="none"/>
<path d="M164.90 140.50L167.60 143.30L170.30 140.50" fill="none" stroke="#444" stroke-width="1.2"/>
<rect x="179.3" y="145.9" width="16.4" height="3.9" fill="#ed1c24" stroke="none"/>
<path d="M202.90 140.50L205.60 143.30L208.30 140.50" fill="none" stroke="#444" stroke-width="1.2"/>
<path d="M237.10 141.80L239.80 144.60L242.50 141.80" fill="none" stroke="#444" stroke-width="1.2"/>
<path d="M269.6 137.8L272 135.6L274.4 137.8" stroke="#1e8ad6" stroke-width="1.3"/>
<path d="M292.3 135.6L294.6 137.8L296.9 135.6" stroke="#1e8ad6" stroke-width="1.3"/>
<path d="M297.5 169.4V163.8H303.1" fill="none" stroke="#777" stroke-width="0.9"/><path d="M299.9 166.20000000000002L302.9 169.20000000000002M303.1 166.4V169.4H300.1" fill="none" stroke="#777" stroke-width="0.9"/>
</g>
<g id="ic-para" fill="none">
<rect x="319.5" y="88.3" width="2.7" height="2.7" fill="#1e8ad6"/>
<path d="M324.6 89.6H334.7M362.6 89.6H372.6" stroke="#555" stroke-width="1.2"/>
<rect x="319.5" y="94.2" width="2.7" height="2.7" fill="#1e8ad6"/>
<path d="M324.6 95.5H334.7M362.6 95.5H372.6" stroke="#555" stroke-width="1.2"/>
<rect x="319.5" y="100.2" width="2.7" height="2.7" fill="#1e8ad6"/>
<path d="M324.6 101.5H334.7M362.6 101.5H372.6" stroke="#555" stroke-width="1.2"/>
<path d="M343.30 95.20L346.00 98.00L348.70 95.20" fill="none" stroke="#444" stroke-width="1.2"/>
<path d="M381.30 95.20L384.00 98.00L386.70 95.20" fill="none" stroke="#444" stroke-width="1.2"/>
<path d="M400.6 89.6H410.7M403.8 95.5H410.7M406.4 101.5H410.7" stroke="#555" stroke-width="1.2"/>
<path d="M415.20 95.20L417.90 98.00L420.60 95.20" fill="none" stroke="#444" stroke-width="1.2"/>
<path d="M437.3 89.7H451.2M437.3 101.5H451.2M445.4 93.7H451.2M445.4 97.6H451.2" stroke="#555" stroke-width="1.2"/>
<path d="M443.6 95.7H438M440.2 93.4L437.9 95.7L440.2 98" stroke="#1e8ad6" stroke-width="1.2"/>
<path d="M460 89.7H474.2M460 101.5H474.2M468.1 93.7H474.2M468.1 97.6H474.2" stroke="#555" stroke-width="1.2"/>
<path d="M460.2 95.7H465.8M463.6 93.4L465.9 95.7L463.6 98" stroke="#1e8ad6" stroke-width="1.2"/>
<path d="M320.9 112.7H334.7M320.9 116.8H330.7M320.9 120.8H334.7M320.9 125.0H330.7" stroke="#555" stroke-width="1.25"/>
<path d="M343.3 112.7H357.3M345.3 116.8H355.1M343.3 120.8H357.3M345.3 125.0H355.1" stroke="#555" stroke-width="1.25"/>
<path d="M365.9 112.7H379.8M370.2 116.8H379.8M365.9 120.8H379.8M370.2 125.0H379.8" stroke="#555" stroke-width="1.25"/>
<path d="M388.6 112.7H402.8M388.6 116.8H402.8M388.6 120.8H402.8M388.6 125.0H402.8" stroke="#555" stroke-width="1.25"/>
<path d="M423.3 112.7H432.5M423.3 116.8H432.5M423.3 120.8H432.5M423.3 125.0H432.5" stroke="#555" stroke-width="1.25"/>
<path d="M418.9 113V118.4M418.9 120.4V125.8M416.5 115.4L418.9 113L421.3 115.4M416.5 123.4L418.9 125.8L421.3 123.4" stroke="#1e8ad6" stroke-width="1.2"/>
<path d="M435.90 118.40L438.60 121.20L441.30 118.40" fill="none" stroke="#444" stroke-width="1.2"/>
<path d="M324.6 134.6L331.6 140.6L326.8 145L321.8 140.2Z" stroke="#555" stroke-width="1.1" stroke-linejoin="round"/>
<path d="M324.6 134.6L326.4 137" stroke="#555" stroke-width="1"/>
<path d="M331.6 138.2C333.6 139.4 334 141.4 333.4 143.4" stroke="#1e6fc0" stroke-width="1.3"/>
<rect x="319.8" y="146.3" width="15.8" height="2.9" fill="#fff" stroke="#9a9a9a" stroke-width="0.8"/>
<path d="M343.30 140.80L346.00 143.60L348.70 140.80" fill="none" stroke="#444" stroke-width="1.2"/>
<path d="M358 135.2H372.8M358 141.6H372.8M358 135.2V148M365.4 135.2V148M372.8 135.2V148" stroke="#efefef" stroke-width="1.1" stroke-dasharray="1.2 0.9"/>
<path d="M357.6 148.2H373.2" stroke="#444" stroke-width="1.3"/>
<path d="M381.10 140.80L383.80 143.60L386.50 140.80" fill="none" stroke="#444" stroke-width="1.2"/>
<path d="M414.4 134.2V149M411.2 145.8L414.4 149.2L417.6 145.8" stroke="#444" stroke-width="1.2"/>
<path d="M475.2 169.4V163.8H480.8" fill="none" stroke="#777" stroke-width="0.9"/><path d="M477.59999999999997 166.20000000000002L480.59999999999997 169.20000000000002M480.8 166.4V169.4H477.8" fill="none" stroke="#777" stroke-width="0.9"/>
</g>
<g id="ic-styles" fill="none">
<path d="M529.6 97.4C528 96.4 524 101 516 110.6L518.4 112.4C526 103.6 530.6 98.8 529.6 97.4Z" fill="#fafafa" stroke="#444" stroke-width="1"/>
<path d="M516 110.4C512.6 110 510.8 113.4 507.8 114.6C510.6 117 516.8 117 518.6 112.4Z" fill="#3a8ee0" stroke="#3a8ee0" stroke-width="0.6"/>
<path d="M510.70 141.00L513.40 143.80L516.10 141.00" fill="none" stroke="#444" stroke-width="1.2"/>
<path d="M530.2 169.4V163.8H535.8000000000001" fill="none" stroke="#777" stroke-width="0.9"/><path d="M532.6 166.20000000000002L535.6 169.20000000000002M535.8000000000001 166.4V169.4H532.8000000000001" fill="none" stroke="#777" stroke-width="0.9"/>
<circle cx="570.4" cy="96.2" r="5.2" stroke="#555" stroke-width="1.1"/><path d="M566.6 100L560.8 105.9" stroke="#555" stroke-width="1.2"/>
<path d="M564.50 138.80L567.20 141.60L569.90 138.80" fill="none" stroke="#444" stroke-width="1.2"/>
<rect x="616.4" y="87.6" width="12" height="21" rx="2.2" fill="#83b9e8" stroke="#2f86d8" stroke-width="1.1"/>
<path d="M613 101.4V105.4A6.5 6.5 0 0 0 619.5 111.9H625.300A6.5 6.5 0 0 0 631.8 105.4V101.4M622.4 112V115.4M617.8 115.6H627" stroke="#666" stroke-width="1.2"/>
<path d="M619.50 141.40L622.20 144.20L624.90 141.40" fill="none" stroke="#444" stroke-width="1.2"/>
<path d="M661.9 170.2L666.4 165.6L670.9 170.2" stroke="#444" stroke-width="1.2"/>
</g>
<g id="ic-doc" fill="none">
<path d="M20.2 207H28.6M24.4 202.6V211.2" stroke="#666" stroke-width="0.9"/>
<path d="M23 204L24.4 202.4L25.8 204M23 209.8L24.4 211.4L25.8 209.8M21.6 205.6L20 207L21.6 208.4M27.2 205.6L28.8 207L27.2 208.4" stroke="#666" stroke-width="0.8"/>
<path d="M665.4 186L669 182.2L672.6 186Z" fill="#666"/>
<path d="M665.2 493.4L668.8 497.4L672.4 493.4Z" fill="#666"/>
<path d="M29.6 509.4L25.6 512.9L29.6 516.4Z" fill="#666"/>
<path d="M649.6 509.4L653.6 512.9L649.6 516.4Z" fill="#666"/>
<path d="M569.6 477.2V492.6L573.2 489.4L575.8 495.2L578.2 494.2L575.6 488.4H580.4Z" fill="#fff" stroke="#555" stroke-width="0.8" stroke-linejoin="round"/>
</g>
<g id="ic-status" fill="none" stroke="#666">
<path d="M179.6 527.4C177.6 526.4 175.6 526.4 173.6 527V536.6C175.6 536 177.6 536 179.6 537C181 536.2 182.2 536 183.4 536.2M179.6 527.4V537M179.6 527.4C181 526.6 182.4 526.4 183.8 526.6" stroke-width="0.9"/>
<path d="M182.4 529.4L186.2 533.6M186.2 529.4L182.4 533.6" stroke-width="1"/>
<path d="M424.9 527.4C422.9 526.4 420.9 526.4 418.9 527V537C420.9 536.4 422.9 536.4 424.9 537.4C426.9 536.4 428.9 536.4 430.9 537V527C428.9 526.4 426.9 526.4 424.9 527.4ZM424.9 527.4V537.4" stroke-width="0.9"/>
<path d="M420.4 529.4H423.4M420.4 531.4H423.4M420.4 533.4H423.4M426.4 529.4H429.4M426.4 531.4H429.4M426.4 533.4H429.4" stroke-width="0.7"/>
<rect x="449" y="526.4" width="11.4" height="11.4" stroke-width="0.9" stroke="#555"/>
<path d="M451.2 529.4H458.2M451.2 531.6H458.2M451.2 533.8H458.2M451.2 536H458.2" stroke-width="0.7" stroke="#555"/>
<path d="M486.4 537.4H479.4V526.4H490.4V530.6" stroke-width="0.9"/>
<path d="M481.4 529H488.4M481.4 531.2H486.4M481.4 533.4H484.6" stroke-width="0.7"/>
<circle cx="488.6" cy="535" r="3.2" stroke-width="0.9" fill="#f3f3f3"/><path d="M485.6 535H491.6M488.6 532V538" stroke-width="0.6"/>
<path d="M504 532.4H511.2" stroke-width="1.3" stroke="#555"/>
<path d="M515.4 532.4H613.8" stroke-width="0.8" stroke="#8a8a8a"/>
<rect x="562.4" y="527.2" width="4.2" height="10.4" fill="#666" stroke="none"/>
<path d="M617 532.4H624.4M620.7 528.7V536.1" stroke-width="1.3" stroke="#555"/>
</g>
</svg>
<span class="t" id="t_va" style="left:434.80px;top:28.00px;font-size:10.0px;line-height:12px;font-weight:400;color:#6a6a6a;transform:scaleX(1.0560);z-index:4">VA</span>
<span class="t" id="g_effA0" style="left:108.44px;top:132.00px;font-size:16.0px;line-height:20px;font-weight:700;color:#2b86d9;transform:scaleX(1.1238);z-index:4;-webkit-text-stroke:2.4px #2b86d9;text-shadow:0 0 2px #8cc2ee">A</span>
<span class="t" id="g_effA" style="left:108.44px;top:132.00px;font-size:16.0px;line-height:20px;font-weight:700;color:#fff;transform:scaleX(1.1238);z-index:5">A</span>
<span class="t" id="g_num0" style="left:357.48px;top:87.00px;font-size:5.6px;line-height:7px;font-weight:700;color:#1e8ad6;transform:scaleX(0.8727);z-index:4">1</span>
<span class="t" id="g_num1" style="left:357.48px;top:93.00px;font-size:5.6px;line-height:7px;font-weight:700;color:#1e8ad6;transform:scaleX(0.8727);z-index:4">2</span>
<span class="t" id="g_num2" style="left:357.48px;top:99.00px;font-size:5.6px;line-height:7px;font-weight:700;color:#1e8ad6;transform:scaleX(0.8727);z-index:4">3</span>
<span class="t" id="g_ml1" style="left:395.80px;top:86.00px;font-size:5.0px;line-height:6px;font-weight:700;color:#1e8ad6;transform:scaleX(0.8000);z-index:4">1</span>
<span class="t" id="g_mla" style="left:398.26px;top:92.00px;font-size:6.4px;line-height:8px;font-weight:700;color:#1e8ad6;transform:scaleX(0.9429);z-index:4">a</span>
<span class="t" id="g_mli" style="left:403.20px;top:98.00px;font-size:6.2px;line-height:8px;font-weight:700;color:#1e8ad6;transform:scaleX(1.6000);z-index:4">i</span>
</body>
</html>
